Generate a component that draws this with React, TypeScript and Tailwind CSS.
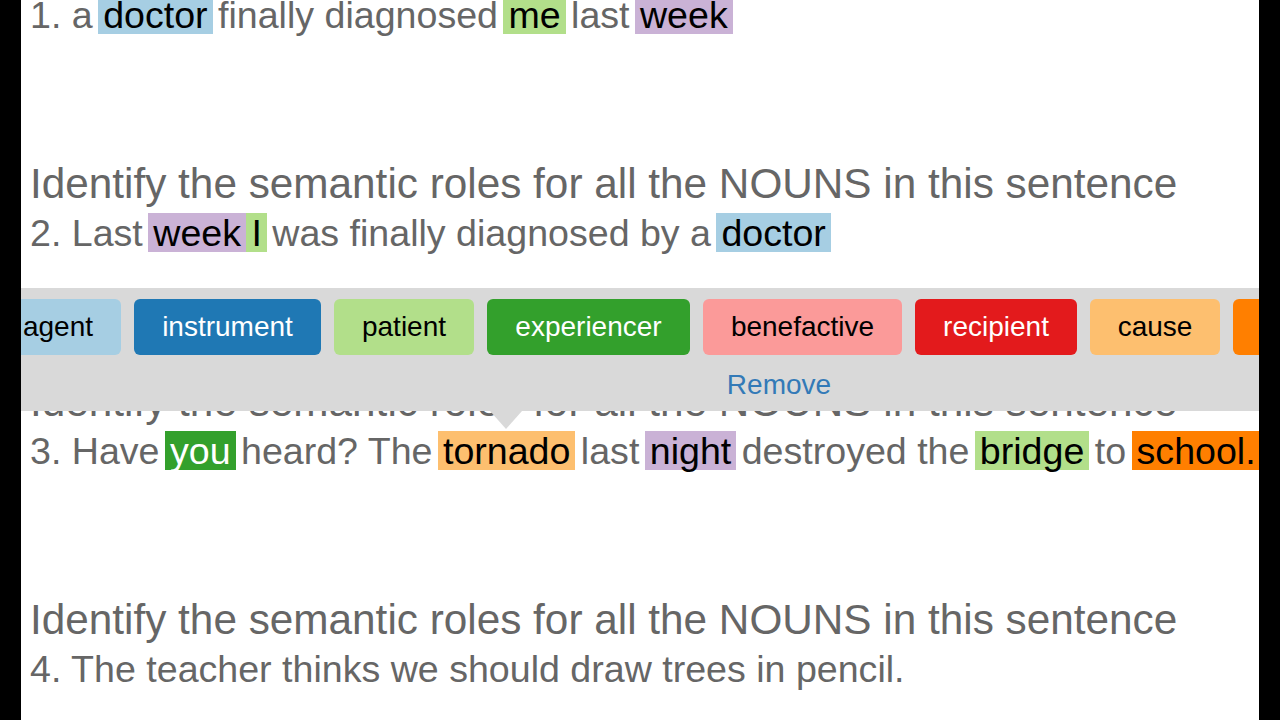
import React from "react";

type Seg = string | { t: string; c: string; w?: boolean };

const BLUE = "bg-[#a6cee3]";
const GREEN = "bg-[#b2df8a]";
const PURPLE = "bg-[#cab2d6]";

function Hl({ t, c, w }: { t: string; c: string; w?: boolean }) {
  return (
    <span
      className={`inline-block h-[39px] leading-[41.2px] px-[5px] -mx-[5px] align-baseline ${c} ${
        w ? "text-white" : "text-black"
      }`}
    >
      {t}
    </span>
  );
}

function Sentence({ segs }: { segs: Seg[] }) {
  return (
    <div className="h-[48px] leading-[48px] text-[37.6px] whitespace-nowrap">
      {segs.map((s, i) =>
        typeof s === "string" ? (
          <React.Fragment key={i}>{s}</React.Fragment>
        ) : (
          <Hl key={i} t={s.t} c={s.c} w={s.w} />
        )
      )}
    </div>
  );
}

function Header() {
  return (
    <div className="h-[51px] leading-[51px] text-[42.3px] whitespace-nowrap">
      Identify the semantic roles for all the NOUNS in this sentence
    </div>
  );
}

const buttons: { label: string; bg: string; w: string; white?: boolean }[] = [
  { label: "agent", bg: "bg-[#a6cee3]", w: "w-[126px]" },
  { label: "instrument", bg: "bg-[#1f78b4]", w: "w-[187px]", white: true },
  { label: "patient", bg: "bg-[#b2df8a]", w: "w-[140px]" },
  { label: "experiencer", bg: "bg-[#33a02c]", w: "w-[203px]", white: true },
  { label: "benefactive", bg: "bg-[#fb9a99]", w: "w-[199px]" },
  { label: "recipient", bg: "bg-[#e31a1c]", w: "w-[162px]", white: true },
  { label: "cause", bg: "bg-[#fdbf6f]", w: "w-[130px]" },
  { label: "location", bg: "bg-[#ff7f00]", w: "w-[152px]" },
  { label: "time", bg: "bg-[#cab2d6]", w: "w-[112px]" },
];

export default function App() {
  return (
    <div
      className="w-[1280px] h-[720px] bg-black flex overflow-hidden"
      style={{ fontFamily: '"Liberation Sans", Arial, Helvetica, sans-serif' }}
    >
      <div className="ml-[21px] w-[1238px] h-[720px] bg-white relative overflow-hidden">
        <div className="pl-[9px] text-[#666666]">
          <div className="mt-[-9px]">
            <Sentence
              segs={[
                "1. a ",
                { t: "doctor", c: BLUE },
                " finally diagnosed ",
                { t: "me", c: GREEN },
                " last ",
                { t: "week", c: PURPLE },
              ]}
            />
          </div>
          <div className="mt-[119px]">
            <Header />
            <Sentence
              segs={[
                "2. Last ",
                { t: "week\u00a0", c: PURPLE },
                { t: "I", c: GREEN },
                " was finally diagnosed by a ",
                { t: "doctor", c: BLUE },
              ]}
            />
          </div>
          <div className="mt-[119px]">
            <Header />
            <Sentence
              segs={[
                "3. Have ",
                { t: "you", c: "bg-[#33a02c]", w: true },
                " heard? The ",
                { t: "tornado", c: "bg-[#fdbf6f]" },
                " last ",
                { t: "night", c: PURPLE },
                " destroyed the ",
                { t: "bridge", c: GREEN },
                " to ",
                { t: "school.", c: "bg-[#ff7f00]" },
              ]}
            />
          </div>
          <div className="mt-[119px]">
            <Header />
            <Sentence segs={["4. The teacher thinks we should draw trees in pencil."]} />
          </div>
        </div>

        {/* role picker popup */}
        <div className="absolute left-0 right-0 top-[288px] h-[123px] bg-[#d9d9d9] overflow-hidden">
          <div className="ml-[-26px] w-[1568px] pt-[11px] flex flex-col">
            <div className="flex gap-[13px]">
              {buttons.map((b) => (
                <div
                  key={b.label}
                  className={`${b.w} ${b.bg} shrink-0 h-[56px] rounded-[6px] flex items-center justify-center text-[28px] ${
                    b.white ? "text-white" : "text-black"
                  }`}
                >
                  {b.label}
                </div>
              ))}
            </div>
            <div className="mt-[10px] h-[40px] leading-[40px] text-center text-[28px] text-[#337ab7]">
              Remove
            </div>
          </div>
        </div>
        <div className="absolute top-[411px] left-[469px] w-0 h-0 border-l-[16px] border-r-[16px] border-t-[18px] border-l-transparent border-r-transparent border-t-[#d9d9d9]" />
      </div>
    </div>
  );
}
